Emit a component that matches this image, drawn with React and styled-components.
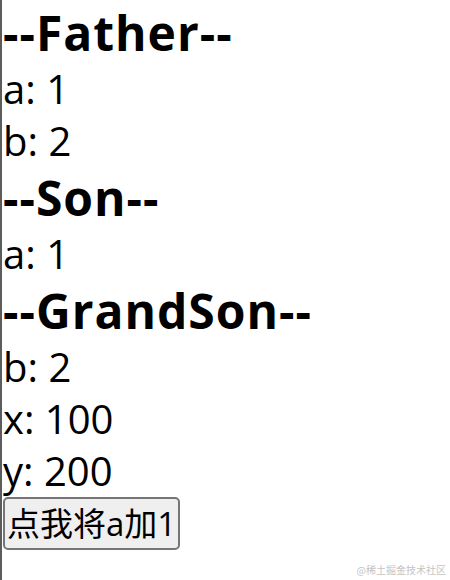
import React, { useState } from 'react';
import styled, { createGlobalStyle } from 'styled-components';

const GlobalStyle = createGlobalStyle`
  html, body {
    margin: 0;
    padding: 0;
    background: #ffffff;
  }
  body {
    font-family: "Open Sans", "Noto Sans CJK SC", sans-serif;
    color: #000000;
  }
`

const S_page = styled.div`
  min-height: 100vh;
  box-sizing: border-box;
  border-left: solid 2px #5c5c5c;
  padding: 2px 0 0 1px;
  position: relative;
`
const S_h3 = styled.h3`
  margin: -2px 0 -3px 0;
  font-size: 48px;
  font-weight: 700;
  letter-spacing: 1px;
  line-height: 66px;
`
const S_line = styled.div`
  font-size: 40px;
  line-height: 52px;
`
const S_btn = styled.button`
  font-family: "Open Sans", "Noto Sans CJK SC", sans-serif;
  font-size: 33px;
  line-height: 49px;
  padding: 0 2px;
  margin-top: 0;
  color: #000000;
  background: #efefef;
  border: solid 2px #767676;
  border-radius: 5px;
  cursor: pointer;
`
const S_mark = styled.span`
  position: absolute;
  right: 4px;
  bottom: 3px;
  font-family: "Noto Sans CJK SC", sans-serif;
  font-size: 10px;
  color: #c4c4c4;
`

const GrandSon = ({ b, x, y }) => (
  <div>
    <S_h3>--GrandSon--</S_h3>
    <S_line>b: {b}</S_line>
    <S_line>x: {x}</S_line>
    <S_line>y: {y}</S_line>
  </div>
)

const Son = ({ a, b }) => (
  <div>
    <S_h3>--Son--</S_h3>
    <S_line>a: {a}</S_line>
    <GrandSon b={b} x={100} y={200} />
  </div>
)

const App = () => {
  const [a, setA] = useState(1);
  const b = 2;
  return (
    <>
      <GlobalStyle />
      <S_page>
        <S_h3>--Father--</S_h3>
        <S_line>a: {a}</S_line>
        <S_line>b: {b}</S_line>
        <Son a={a} b={b} />
        <S_btn onClick={() => setA(a + 1)}>点我将a加1</S_btn>
        <S_mark>@稀土掘金技术社区</S_mark>
      </S_page>
    </>
  );
}

export default App;
